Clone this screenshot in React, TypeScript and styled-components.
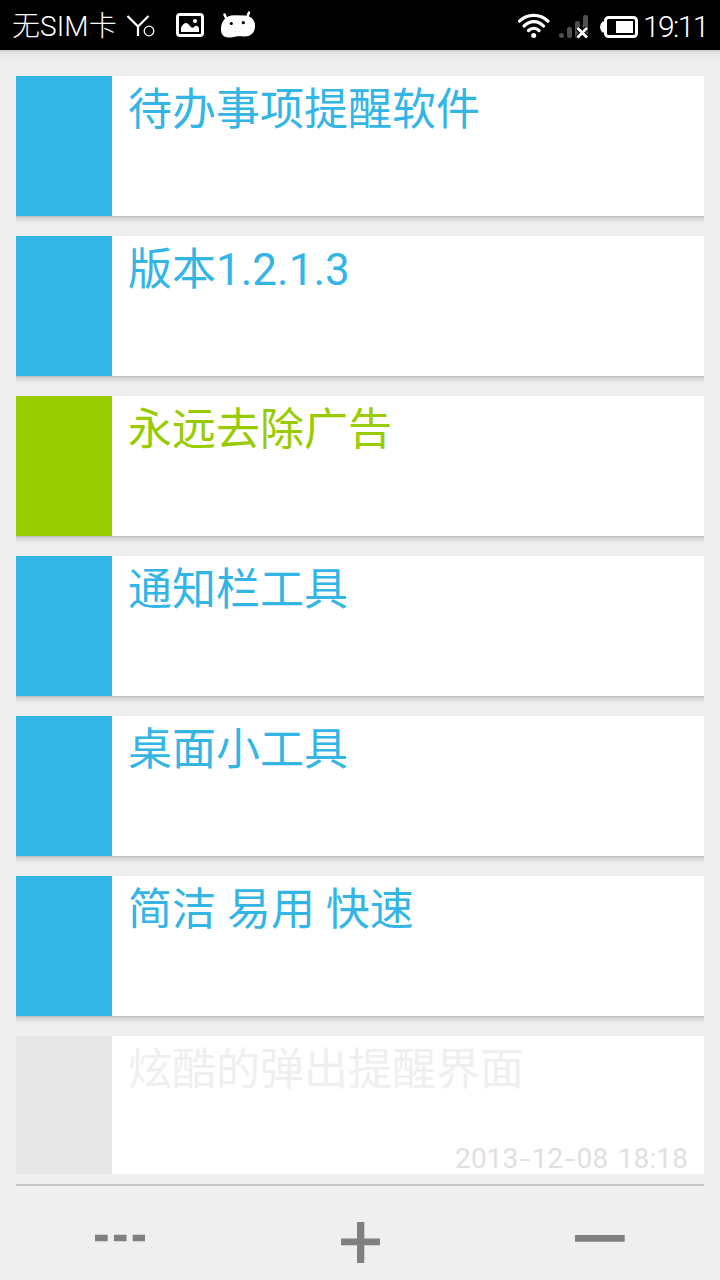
import React from "react";
import styled, { createGlobalStyle } from "styled-components";

const GlobalStyle = createGlobalStyle`
  * { box-sizing: border-box; }
  body { margin: 0; background: #efefef; font-family: Roboto, "Noto Sans CJK SC", sans-serif; }
`;

const Screen = styled.div`
  width: 720px;
  height: 1280px;
  display: flex;
  flex-direction: column;
  overflow: hidden;
  background: #efefef;
`;

const StatusBar = styled.header`
  height: 50px;
  flex: none;
  display: flex;
  align-items: center;
  padding: 0 13px 0 12px;
  background: #000;
  color: #fff;
`;

const Carrier = styled.span`
  width: 110px;
  padding-top: 3px;
  font-size: 28px;
  line-height: 50px;
  letter-spacing: 0.1px;
  white-space: nowrap;
  font-weight: 300;
`;

const Clock = styled.time`
  width: 64px;
  font-weight: 300;
  font-size: 30px;
  line-height: 54px;
  letter-spacing: -1.6px;
  white-space: nowrap;
  padding-top: 3px;
`;

const StatusIcons = styled.svg`
  flex: none;
  display: block;
`;

const Spacer = styled.div`
  flex: 1;
`;

const List = styled.main`
  height: 1124px;
  flex: none;
  display: flex;
  flex-direction: column;
  padding: 26px 16px 0;
  overflow: hidden;
  background: linear-gradient(#c6c6c6, #e2e2e2 2px, #e8e8e8 5px, #efefef 12px);
`;

const Card = styled.article`
  height: 140px;
  flex: none;
  display: flex;
  background: #fff;
`;

const CardShadow = styled.div`
  height: 20px;
  flex: none;
  background: linear-gradient(#c0c0c0 0 1px, #cccccc 1px, #e0e0e0 4px, #ececec 7px, #efefef 8px);
`;

const Marker = styled.div<{ $color: string }>`
  width: 96px;
  background: ${(p) => p.$color};
`;

const Body = styled.div`
  flex: 1;
  display: flex;
  flex-direction: column;
  justify-content: space-between;
  padding: 2px 16px 0 16px;
`;

const Title = styled.h2<{ $color: string }>`
  margin: 0;
  font-weight: 400;
  font-size: 44px;
  line-height: 64px;
  color: ${(p) => p.$color};
  white-space: nowrap;
`;

const Stamp = styled.time`
  align-self: flex-end;
  font-size: 28px;
  line-height: 34px;
  letter-spacing: 0.1px;
  word-spacing: 2.5px;
  color: #e0e0e0;
`;

const Hyphen = styled.span`
  display: inline-block;
  margin: 0 2.7px;
  transform: scaleX(1.35);
`;

const Footer = styled.footer`
  flex: 1;
  display: flex;
  flex-direction: column;
  padding: 10px 16px 0;
`;

const Rule = styled.div`
  height: 2px;
  background: #c6c6c6;
`;

const Actions = styled.nav`
  flex: 1;
  display: flex;
  justify-content: space-between;
`;

const Action = styled.button`
  width: 208px;
  padding: 0;
  border: 0;
  background: none;
  svg { display: block; }
`;

const BLUE = "#33b5e5";
const items = [
  { title: "待办事项提醒软件", color: BLUE, text: BLUE },
  { title: "版本1.2.1.3", color: BLUE, text: BLUE },
  { title: "永远去除广告", color: "#99cc00", text: "#99cc00" },
  { title: "通知栏工具", color: BLUE, text: BLUE },
  { title: "桌面小工具", color: BLUE, text: BLUE },
  { title: "简洁 易用 快速", color: BLUE, text: BLUE },
  { title: "炫酷的弹出提醒界面", color: "#e7e7e7", text: "#efefef", stamp: "2013-12-08 18:18" },
];

const NotificationIcons = () => (
  <StatusIcons width="138" height="50" viewBox="122 0 138 50" fill="none" stroke="#fff">
    <path d="M127.5 16L138 26.5V36M138 26.5L148.5 16" strokeWidth="2.2" />
    <circle cx="149" cy="31" r="4.8" strokeWidth="1.3" />
    <rect x="177.5" y="14.5" width="25" height="21" rx="2.5" strokeWidth="3" />
    <circle cx="195" cy="21" r="2" fill="#fff" stroke="none" />
    <path d="M181 32V27.5C184 22 187 21.5 190 26Q192 29 194 27Q197 24 199 28V32Z" fill="#fff" stroke="none" />
    <path d="M224.5 14.5L227 20M249 12.5L246.5 19" strokeWidth="2.5" strokeLinecap="round" />
    <path d="M221 29C221 21 226 15.5 234 15.3L245 15.5C252 16 255.5 21 255 27C254.500 34 249 37.500 242 36.300C238 35.800 236 36.500 232 37.300C226 38.500 220.500 36 221 29Z" fill="#fff" stroke="none" />
    <circle cx="231.300" cy="23.500" r="1.600" fill="#000" stroke="none" />
    <circle cx="243.300" cy="22.700" r="1.600" fill="#000" stroke="none" />
    <path d="M235 28.500h1M240 28.500h1M235 31.500h1M239 31.500h1" stroke="#ddd" strokeWidth="1" />
  </StatusIcons>
);

const SystemIcons = () => (
  <StatusIcons width="128" height="50" viewBox="515 0 128 50" fill="none" stroke="#fff">
    <g strokeWidth="3.200" strokeLinecap="round">
      <path d="M519.500 21.200C527.500 13.500 540 13.500 548 21.200" />
      <path d="M524 26C530 20.300 538 20.300 543.500 26" />
      <path d="M528.500 30.500C531.500 27.500 536 27.500 539 30.500" />
    </g>
    <circle cx="533.700" cy="35.500" r="2.500" fill="#fff" stroke="none" />
    <g fill="#505050" stroke="none">
      <circle cx="561.500" cy="35.500" r="2.500" />
      <rect x="567" y="27" width="5" height="11" rx="2" />
      <rect x="575" y="21" width="5" height="17" rx="2" />
      <rect x="583" y="15" width="5" height="23" rx="2" />
    </g>
    <path d="M577.500 28L587 37.500M587 28L577.500 37.500" stroke="#000" strokeWidth="5" />
    <path d="M577.500 28L587 37.500M587 28L577.500 37.500" strokeWidth="2.800" />
    <rect x="605.500" y="17.500" width="31" height="19" rx="3" strokeWidth="3" />
    <path d="M605 21.500H602.500Q600 24 600 27T602.500 32.500H605Z" fill="#fff" stroke="none" />
    <rect x="616" y="21" width="17" height="12" fill="#fff" stroke="none" />
  </StatusIcons>
);

export default function App() {
  return (
    <>
      <GlobalStyle />
      <Screen>
        <StatusBar>
          <Carrier>无SIM卡</Carrier>
          <NotificationIcons />
          <Spacer />
          <SystemIcons />
          <Clock>19:11</Clock>
        </StatusBar>
        <List>
          {items.map((item) => (
            <React.Fragment key={item.title}>
              <Card>
                <Marker $color={item.color} />
                <Body>
                  <Title $color={item.text}>{item.title}</Title>
                  {item.stamp && (
                    <Stamp>
                      {item.stamp.split("-").map((part, i) => (
                        <React.Fragment key={i}>
                          {i > 0 && <Hyphen>-</Hyphen>}
                          {part}
                        </React.Fragment>
                      ))}
                    </Stamp>
                  )}
                </Body>
              </Card>
              <CardShadow />
            </React.Fragment>
          ))}
        </List>
        <Footer>
          <Rule />
          <Actions>
            <Action aria-label="更多">
              <svg width="208" height="94" viewBox="16 1186 208 94" fill="#808080">
                <path d="M95 1234.700h12.700v6.500H95zM114 1234.700h12.500v6.500H114zM132.700 1234.700h12.300v6.500h-12.300z" />
              </svg>
            </Action>
            <Action aria-label="添加">
              <svg width="208" height="94" viewBox="256 1186 208 94" fill="#808080">
                <path d="M357 1222h7.300v16.500H380v6.700h-15.700V1263H357v-17.800h-16v-6.700h16z" />
              </svg>
            </Action>
            <Action aria-label="删除">
              <svg width="208" height="94" viewBox="496 1186 208 94" fill="#808080">
                <path d="M575 1235h49.700v6.700H575z" />
              </svg>
            </Action>
          </Actions>
        </Footer>
      </Screen>
    </>
  );
}
